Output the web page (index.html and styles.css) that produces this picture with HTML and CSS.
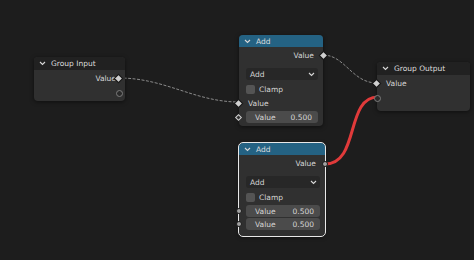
FILE: index.html
```html
<html>
    <head>
        <meta charset="UTF-8">
        <title>node editor</title>
        <link rel="stylesheet" href="styles.css">
    </head>
    <body>
        <div class="editor">
            <svg class="wires" width="474" height="260">
                <path class="field" d="M119 78 C 165 78, 195 102, 239 102"/>
                <path class="field" d="M323 55 C 345 55, 352 83, 377 83"/>
                <path class="link" d="M325 164 C 360 164, 345 97, 378 97"/>
            </svg>

            <div class="node group-in">
                <div class="head"><svg class="chev" width="7" height="5"><path d="M1 1 L3.5 3.5 L6 1"/></svg>Group Input</div>
                <div class="row out">Value<i class="sock diamond right"></i></div>
                <div class="row out slim"><i class="sock hollow right"></i></div>
            </div>

            <div class="node add add1">
                <div class="head blue"><svg class="chev" width="7" height="5"><path d="M1 1 L3.5 3.5 L6 1"/></svg>Add</div>
                <div class="row out">Value<i class="sock diamond right"></i></div>
                <div class="select">Add<svg class="chev" width="7" height="5"><path d="M1 1 L3.5 3.5 L6 1"/></svg></div>
                <div class="check"><b></b>Clamp</div>
                <div class="row in">Value<i class="sock diamond left"></i></div>
                <div class="field-row"><i class="sock dotted left"></i><div class="num"><span>Value</span><span>0.500</span></div></div>
            </div>

            <div class="node group-out">
                <div class="head"><svg class="chev" width="7" height="5"><path d="M1 1 L3.5 3.5 L6 1"/></svg>Group Output</div>
                <div class="row in">Value<i class="sock diamond left"></i></div>
                <div class="row in slim"><i class="sock hollow left"></i></div>
            </div>

            <div class="node add add2">
                <div class="head blue"><svg class="chev" width="7" height="5"><path d="M1 1 L3.5 3.5 L6 1"/></svg>Add</div>
                <div class="row out">Value<i class="sock dot right"></i></div>
                <div class="select">Add<svg class="chev" width="7" height="5"><path d="M1 1 L3.5 3.5 L6 1"/></svg></div>
                <div class="check"><b></b>Clamp</div>
                <div class="field-row"><i class="sock dot left"></i><div class="num"><span>Value</span><span>0.500</span></div></div>
                <div class="field-row"><i class="sock dot left"></i><div class="num"><span>Value</span><span>0.500</span></div></div>
            </div>
        </div>
    </body>
</html>
```

FILE: styles.css
```css
body{margin:0; background:#1d1d1d; font-family:"DejaVu Sans",sans-serif; font-size:7.5px; color:#d6d6d6;}
.editor{position:relative; width:474px; height:260px; overflow:hidden;}

.wires{position:absolute; left:0; top:0;}
.wires path{fill:none;}
.field{stroke:#8a8a8a; stroke-width:1; stroke-dasharray:3 1.5;}
.link{stroke:#e03a3a; stroke-width:3; stroke-linecap:round;}

.node{position:absolute; background:#303030; border-radius:4px; box-shadow:0 1px 4px rgba(0,0,0,0.5); box-sizing:border-box;}
.group-in{left:34px; top:57px; width:91px; height:44px;}
.group-out{left:377px; top:62px; width:93px; height:49px;}
.add1{left:239px; top:35px; width:84px; height:91px;}
.add2{left:239px; top:143px; width:86px; height:93px; outline:1px solid #e8e8e8;}

.head{height:13px; display:flex; align-items:center; padding-left:5px; background:#212121; border-radius:4px 4px 0 0; color:#dedede;}
.head.blue{height:12px; background:#246283;}
.chev{margin-right:5px; fill:none; stroke:#d8d8d8; stroke-width:1.1;}

.row{position:relative; height:15px; display:flex; align-items:center; margin-top:1px;}
.row.slim{height:13px;}
.row.out{justify-content:flex-end; padding-right:9px;}
.row.in{padding-left:9px;}
.add .row.in{height:12px; margin-top:2px;}

.select{height:12px; margin:5px 5px 0 7px; background:#272727; border-radius:3px; display:flex; align-items:center; justify-content:space-between; padding:0 3px 0 4px;}
.select .chev{margin:0;}
.check{height:12px; margin:3px 7px 0; display:flex; align-items:center; gap:4px;}
.check b{width:9px; height:9px; background:#545454; border-radius:2px;}

.field-row{position:relative; margin:2px 5px 0 7px;}
.add2 .field-row:nth-of-type(4){margin-top:3px;}
.num{height:12px; background:#4b4b4b; border-radius:3px; display:flex; align-items:center; justify-content:space-between; padding:0 6px 0 9px; color:#d6d6d6;}
.add2 .field-row + .field-row{margin-top:1px;}

.sock{position:absolute; top:50%; display:block; box-sizing:border-box;}
.sock.right{right:-3px;}
.sock.left{left:-3px;}
.field-row .sock.left{left:-10px;}
.diamond{width:5px; height:5px; margin-top:-2.5px; background:#cfcfcf; transform:rotate(45deg); outline:1px solid #1a1a1a;}
.hollow{width:7px; height:7px; margin-top:-3.5px; border-radius:50%; border:1px solid #7d7d7d; background:#2a2a2a;}
.group-in .hollow{right:2px;}
.dot{width:6px; height:6px; margin-top:-3px; border-radius:50%; background:#a1a1a1; border:1px solid #1a1a1a;}
.dotted{width:5px; height:5px; margin-top:-2.5px; background:#303030; border:1px solid #cfcfcf; transform:rotate(45deg);}
.group-in .diamond{right:4px;}
```
